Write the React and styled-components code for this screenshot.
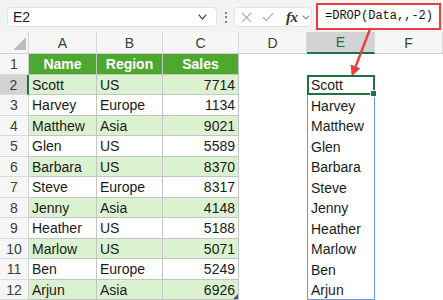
import React from 'react';
import styled, { createGlobalStyle } from 'styled-components';

const GlobalStyle = createGlobalStyle`
  html, body { margin: 0; padding: 0; background: #ffffff; }
  body { font-family: "Liberation Sans", Arial, sans-serif; }
`;

const Screen = styled.div`
  position: relative;
  width: 443px;
  height: 300px;
  overflow: hidden;
  background: #ffffff;
`;

const FormulaBar = styled.div`
  box-sizing: border-box;
  display: flex;
  align-items: center;
  height: 32px;
  padding-left: 7px;
  background: #f3f3f3;
`;

const NameBox = styled.div`
  box-sizing: border-box;
  width: 210px;
  height: 20px;
  margin-top: 2px;
  display: flex;
  align-items: center;
  justify-content: space-between;
  padding: 0 9px 0 5px;
  background: #ffffff;
  border: 1px solid #e4e4e4;
  border-radius: 4px;
  font-size: 14px;
  color: #222;
`;

const Dots = styled.div`
  width: 17px;
  display: flex;
  flex-direction: column;
  align-items: center;
  gap: 2.5px;
  margin-top: 2px;
  & > span {
    width: 2px;
    height: 2px;
    background: #555;
    border-radius: 1px;
  }
`;

const FxBox = styled.div`
  box-sizing: border-box;
  width: 78px;
  height: 20px;
  margin-top: 2px;
  display: flex;
  align-items: center;
  padding-left: 6px;
  gap: 10px;
  background: #ffffff;
  border: 1px solid #e4e4e4;
  border-radius: 4px;
`;

const FxLabel = styled.span`
  font-family: "Liberation Serif", "Times New Roman", serif;
  font-style: italic;
  font-weight: bold;
  font-size: 15px;
  color: #333;
  margin-left: 2px;
  margin-right: -6px;
  letter-spacing: -0.5px;
`;

const FormulaInput = styled.div`
  box-sizing: border-box;
  width: 125px;
  height: 27px;
  margin-left: 4px;
  display: flex;
  align-items: center;
  padding-left: 7px;
  background: #ffffff;
  border: 2px solid #ee3d3d;
  font-family: "Liberation Mono", "Courier New", monospace;
  font-size: 12px;
  color: #111;
`;

const Sheet = styled.div`
  display: grid;
  grid-template-columns: 29px 68px 66px 76px 68px 68px 68px;
  grid-template-rows: 22px repeat(6, 21px 20px);
  font-size: 14px;
  color: #1a1a1a;
`;

const Corner = styled.div`
  box-sizing: border-box;
  position: relative;
  background: #f6f6f6;
  border-right: 1px solid #d6d6d6;
  border-bottom: 1px solid #d0d0d0;
`;

const ColHeader = styled.div`
  box-sizing: border-box;
  display: flex;
  align-items: center;
  justify-content: center;
  background: ${p => (p.$active ? '#d3d3d3' : '#f6f6f6')};
  border-right: 1px solid #dadada;
  border-bottom: ${p => (p.$active ? '2px solid #1f7244' : '1px solid #d0d0d0')};
  color: ${p => (p.$active ? '#1f6b3f' : '#3c3c3c')};
`;

const RowHeader = styled.div`
  box-sizing: border-box;
  display: flex;
  align-items: center;
  justify-content: center;
  background: ${p => (p.$active ? '#d3d3d3' : '#f6f6f6')};
  border-bottom: 1px solid #dadada;
  border-right: ${p => (p.$active ? '2px solid #1f7244' : '1px solid #d0d0d0')};
  color: #3c3c3c;
`;

const tones = {
  head: { bg: '#4ea72e', color: '#ffffff' },
  band: { bg: '#daf2d0', color: '#1a1a1a' },
  plain: { bg: '#ffffff', color: '#1a1a1a' },
};

const TableCell = styled.div`
  box-sizing: border-box;
  position: relative;
  display: flex;
  align-items: center;
  justify-content: ${p => (p.$align === 'right' ? 'flex-end' : p.$align === 'center' ? 'center' : 'flex-start')};
  padding: 0 3px;
  background: ${p => tones[p.$tone].bg};
  color: ${p => tones[p.$tone].color};
  font-weight: ${p => (p.$tone === 'head' ? 'bold' : 'normal')};
  border-right: 1px solid #c4c4c4;
  border-bottom: 1px solid #c4c4c4;
  white-space: nowrap;
  ${p =>
    p.$resize &&
    `
    &::after {
      content: '';
      position: absolute;
      right: 0;
      bottom: 0;
      width: 0;
      height: 0;
      border-left: 5px solid transparent;
      border-bottom: 5px solid #2f5597;
    }
  `}
`;

const EmptyCell = styled.div`
  background: #ffffff;
`;

const SpillCell = styled.div`
  box-sizing: border-box;
  position: relative;
  display: flex;
  align-items: center;
  padding: 0 3px;
  white-space: nowrap;
  border-left: 1px solid #6f97d9;
  border-right: 1px solid #6f97d9;
  border-bottom: ${p => (p.$last ? '1px solid #6f97d9' : 'none')};
  ${p =>
    p.$selected &&
    `
    z-index: 1;
    border: 2px solid #1f7244;
    padding: 0 2px;
    &::after {
      content: '';
      position: absolute;
      right: -4px;
      bottom: -4px;
      width: 5px;
      height: 5px;
      background: #1f7244;
      border: 1px solid #ffffff;
    }
  `}
`;

const Overlay = styled.svg`
  position: absolute;
  left: 0;
  top: 0;
  pointer-events: none;
`;

const Chevron = ({ w = 9, h = 5, color = '#444' }) => (
  <svg width={w} height={h + 1} viewBox={`0 0 ${w} ${h + 1}`}>
    <polyline points={`0.7,0.7 ${w / 2},${h} ${w - 0.7},0.7`} fill="none" stroke={color} strokeWidth="1.2" />
  </svg>
);

const XIcon = () => (
  <svg width="11" height="11" viewBox="0 0 11 11">
    <path d="M1 1 L10 10 M10 1 L1 10" stroke="#b0b0b0" strokeWidth="1.1" fill="none" />
  </svg>
);

const CheckIcon = () => (
  <svg width="12" height="10" viewBox="0 0 12 10">
    <polyline points="0.8,5 4.3,8.6 11.2,0.8" stroke="#b0b0b0" strokeWidth="1.1" fill="none" />
  </svg>
);

const data = [
  ['Scott', 'US', 7714],
  ['Harvey', 'Europe', 1134],
  ['Matthew', 'Asia', 9021],
  ['Glen', 'US', 5589],
  ['Barbara', 'US', 8370],
  ['Steve', 'Europe', 8317],
  ['Jenny', 'Asia', 4148],
  ['Heather', 'US', 5188],
  ['Marlow', 'US', 5071],
  ['Ben', 'Europe', 5249],
  ['Arjun', 'Asia', 6926],
];

const columns = ['A', 'B', 'C', 'D', 'E', 'F'];

export default function App() {
  return (
    <Screen>
      <GlobalStyle />
      <FormulaBar>
        <NameBox>
          <span>E2</span>
          <Chevron />
        </NameBox>
        <Dots>
          <span />
          <span />
          <span />
        </Dots>
        <FxBox>
          <XIcon />
          <CheckIcon />
          <FxLabel>fx</FxLabel>
          <Chevron w={8} h={4} color="#888" />
        </FxBox>
        <FormulaInput>=DROP(Data,,-2)</FormulaInput>
      </FormulaBar>

      <Sheet>
        <Corner>
          <svg width="28" height="21" viewBox="0 0 28 21" style={{ position: 'absolute', left: 0, top: 0 }}>
            <polygon points="13,18 26,18 26,5" fill="#bdbdbd" />
          </svg>
        </Corner>
        {columns.map(c => (
          <ColHeader key={c} $active={c === 'E'}>
            {c}
          </ColHeader>
        ))}

        <RowHeader>1</RowHeader>
        <TableCell $tone="head" $align="center">Name</TableCell>
        <TableCell $tone="head" $align="center">Region</TableCell>
        <TableCell $tone="head" $align="center">Sales</TableCell>
        <EmptyCell />
        <EmptyCell />
        <EmptyCell />

        {data.map(([name, region, sales], i) => {
          const tone = i % 2 === 0 ? 'band' : 'plain';
          const last = i === data.length - 1;
          return (
            <React.Fragment key={name}>
              <RowHeader $active={i === 0}>{i + 2}</RowHeader>
              <TableCell $tone={tone}>{name}</TableCell>
              <TableCell $tone={tone}>{region}</TableCell>
              <TableCell $tone={tone} $align="right" $resize={last}>
                {sales}
              </TableCell>
              <EmptyCell />
              <SpillCell $selected={i === 0} $last={last}>
                {name}
              </SpillCell>
              <EmptyCell />
            </React.Fragment>
          );
        })}
      </Sheet>

      <Overlay width="443" height="300" viewBox="0 0 443 300">
        <line x1="370" y1="29" x2="355.5" y2="67" stroke="#ee3d3d" strokeWidth="2.4" />
        <polygon points="351.7,76.5 360.2,68.3 350.6,64.6" fill="#ee3d3d" />
      </Overlay>
    </Screen>
  );
}
